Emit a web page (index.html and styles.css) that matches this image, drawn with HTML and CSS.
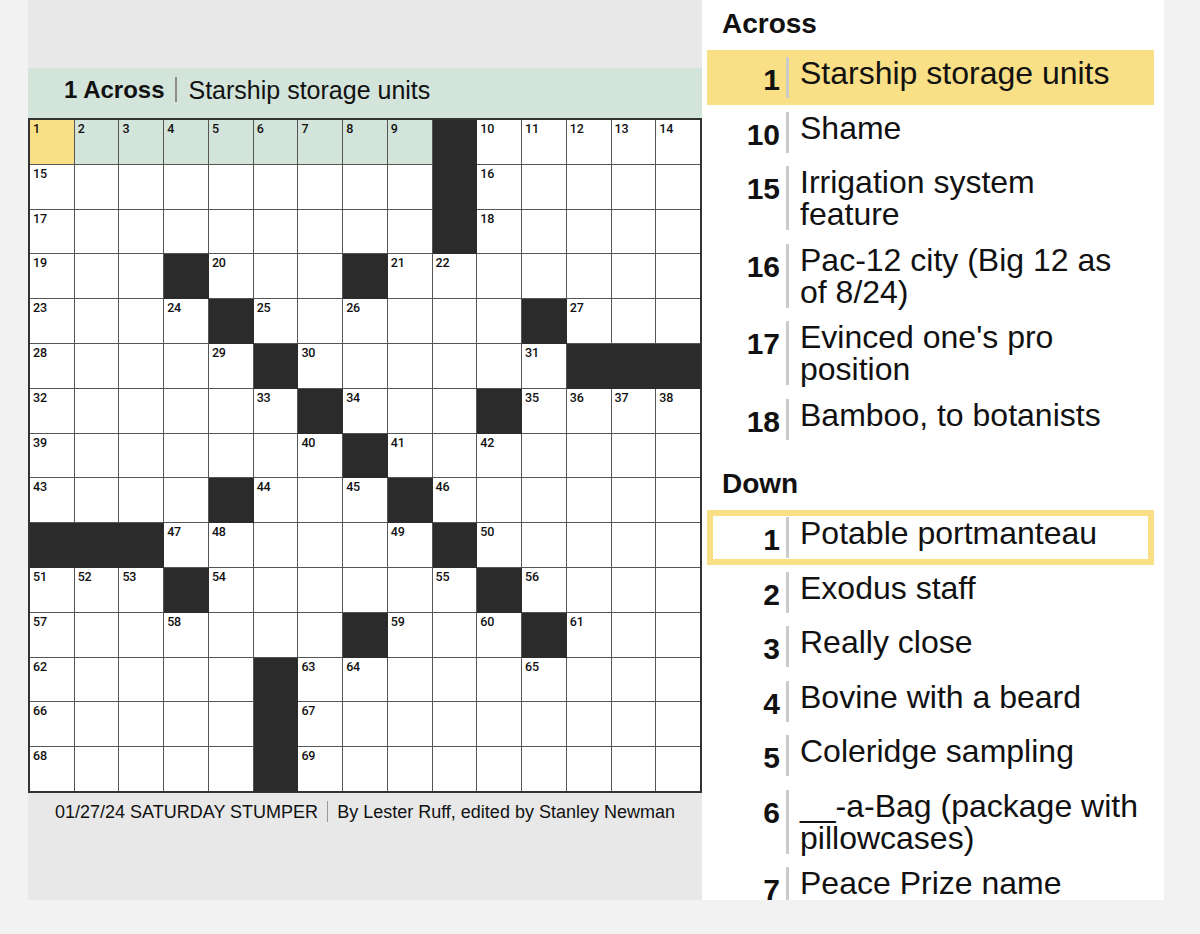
FILE: index.html
```html
<!DOCTYPE html>
<html lang="en">
<head>
    <meta charset="UTF-8">
    <meta name="viewport" content="width=device-width, initial-scale=1.0">
    <title>Saturday Stumper</title>
    <link rel="stylesheet" href="styles.css">
</head>
<body>
    <div class="app">
        <div class="board">
            <div class="clue-bar">
                <span class="clue-label">1 Across</span>
                <span class="clue-sep"></span>
                <span class="clue-current">Starship storage units</span>
            </div>

            <div class="grid" id="grid">
                <!-- Cells are built by the script below -->
            </div>

            <div class="byline">
                01/27/24 SATURDAY STUMPER<span class="byline-sep"></span>By Lester Ruff, edited by Stanley Newman
            </div>
        </div>

        <div class="clues">
            <div class="clue-section across">
                <h2>Across</h2>
                <ol class="clue-list">
                    <li class="clue active"><span class="num">1</span><span class="text">Starship storage units</span></li>
                    <li class="clue"><span class="num">10</span><span class="text">Shame</span></li>
                    <li class="clue"><span class="num">15</span><span class="text">Irrigation system feature</span></li>
                    <li class="clue"><span class="num">16</span><span class="text">Pac-12 city (Big 12 as of 8/24)</span></li>
                    <li class="clue"><span class="num">17</span><span class="text">Evinced one's pro position</span></li>
                    <li class="clue"><span class="num">18</span><span class="text">Bamboo, to botanists</span></li>
                </ol>
            </div>

            <div class="clue-section down">
                <h2>Down</h2>
                <ol class="clue-list">
                    <li class="clue crossing"><span class="num">1</span><span class="text">Potable portmanteau</span></li>
                    <li class="clue"><span class="num">2</span><span class="text">Exodus staff</span></li>
                    <li class="clue"><span class="num">3</span><span class="text">Really close</span></li>
                    <li class="clue"><span class="num">4</span><span class="text">Bovine with a beard</span></li>
                    <li class="clue"><span class="num">5</span><span class="text">Coleridge sampling</span></li>
                    <li class="clue"><span class="num">6</span><span class="text">__-a-Bag (package with pillowcases)</span></li>
                    <li class="clue"><span class="num">7</span><span class="text">Peace Prize name</span></li>
                </ol>
            </div>
        </div>
    </div>

    <script>
        // '.' is a black square, '-' is an open square
        const layout = [
            '---------.-----',
            '---------.-----',
            '---------.-----',
            '---.---.-------',
            '----.------.---',
            '-----.------...',
            '------.---.----',
            '-------.-------',
            '----.---.------',
            '...------.-----',
            '---.------.----',
            '-------.---.---',
            '-----.---------',
            '-----.---------',
            '-----.---------'
        ];

        const grid = document.getElementById('grid');
        const isOpen = (r, c) => r >= 0 && c >= 0 && r < 15 && c < 15 && layout[r][c] === '-';
        let counter = 1;

        for (let r = 0; r < 15; r++) {
            for (let c = 0; c < 15; c++) {
                const cell = document.createElement('div');
                cell.className = 'cell';

                if (!isOpen(r, c)) {
                    cell.classList.add('block');
                } else {
                    // Number a square when an across or down entry starts here
                    const startsAcross = !isOpen(r, c - 1) && isOpen(r, c + 1);
                    const startsDown = !isOpen(r - 1, c) && isOpen(r + 1, c);
                    if (startsAcross || startsDown) {
                        cell.innerHTML = `<span class="cell-num">${counter}</span>`;
                        counter++;
                    }
                    // Current word: 1 Across
                    if (r === 0 && c < 9) {
                        cell.classList.add(c === 0 ? 'selected' : 'word');
                    }
                }
                grid.appendChild(cell);
            }
        }
    </script>
</body>
</html>
```

FILE: styles.css
```css
body {
    margin: 0;
    background-color: #f2f2f2;
    font-family: 'Liberation Sans', Arial, sans-serif;
    color: #111;
}

.app {
    display: flex;
    height: 900px;
    padding-left: 28px;
}

/* Left side: clue bar, grid and byline */
.board {
    width: 674px;
    padding-top: 68px;
    background-color: #e8e8e8;
}

.clue-bar {
    display: flex;
    align-items: flex-start;
    height: 50px;
    box-sizing: border-box;
    padding: 8px 0 0 36px;
    background-color: #d3e4da;
    font-size: 24px;
    line-height: 28px;
}

.clue-label {
    font-weight: bold;
}

.clue-sep {
    width: 2px;
    height: 25px;
    margin: 1px 12px 0 10px;
    background-color: #8c8c8c;
}

.clue-current {
    font-size: 25px;
}

.grid {
    display: grid;
    grid-template-columns: repeat(15, 1fr);
    grid-template-rows: repeat(15, 1fr);
    gap: 1px;
    width: 674px;
    height: 675px;
    box-sizing: border-box;
    border: 2px solid #333;
    background-color: #555;
}

.cell {
    position: relative;
    background-color: #fff;
}

.cell.block {
    background-color: #2b2b2b;
    box-shadow: 1px 1px 0 #2b2b2b, 1px 0 0 #2b2b2b, 0 1px 0 #2b2b2b;
}

.cell.word {
    background-color: #d3e4da;
}

.cell.selected {
    background-color: #f9df85;
}

.cell-num {
    position: absolute;
    top: 2px;
    left: 3px;
    font-family: Roboto, 'Liberation Sans', sans-serif;
    font-size: 12.5px;
    font-weight: 500;
    line-height: 13px;
    letter-spacing: -0.2px;
}

.byline {
    padding-top: 8px;
    text-align: center;
    font-size: 18px;
    line-height: 20px;
}

.byline-sep {
    display: inline-block;
    width: 1px;
    height: 21px;
    margin: 0 9px;
    vertical-align: -4px;
    background-color: #999;
}

/* Right side: clue lists */
.clues {
    display: flex;
    flex-direction: column;
    width: 462px;
    background-color: #fff;
}

.clue-section {
    overflow: hidden;
}

.clue-section.across {
    height: 450px;
    flex: none;
}

.clue-section.down {
    flex: 1;
}

.clue-section h2 {
    margin: 0;
    padding: 8px 0 10px 20px;
    font-size: 28px;
    line-height: 32px;
}

.clue-section.down h2 {
    padding-top: 18px;
}

.clue-list {
    margin: 0 10px 0 5px;
    padding: 0;
    list-style: none;
}

.clue {
    display: flex;
    padding: 7px 0 6.5px;
}

.clue.active {
    background-color: #f9df85;
}

.clue.crossing {
    box-shadow: inset 0 0 0 6px #f9df85;
}

.num {
    flex: none;
    width: 73px;
    padding: 4px 6px 0 0;
    text-align: right;
    font-size: 30px;
    font-weight: bold;
    line-height: 37px;
}

.text {
    flex: 1;
    padding: 0 14px 0 11px;
    border-left: 3px solid #cbcbcb;
    font-size: 32px;
    line-height: 32px;
}
```
